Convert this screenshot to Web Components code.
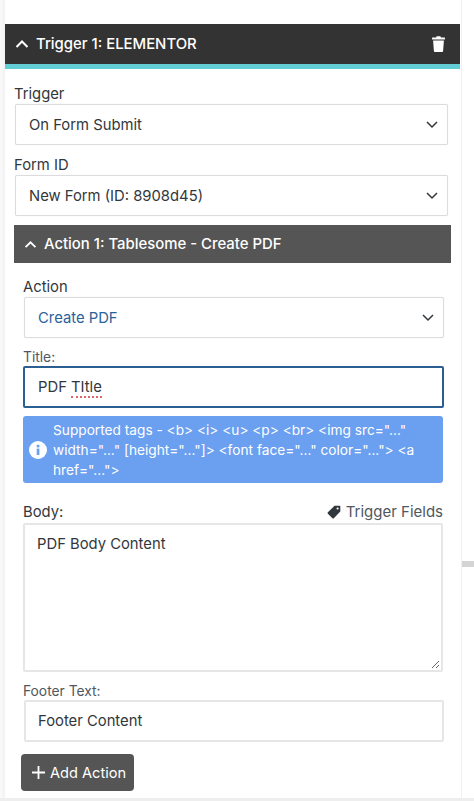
<!DOCTYPE html>
<html>
<head>
<meta charset="utf-8">
<style>
  html, body { margin: 0; height: 100%; background: #fff; overflow: hidden; }
  body { font-family: "Inter", sans-serif; color: #2c3338; }
</style>
</head>
<body>
<trigger-panel>
  <form-select label="Trigger" value="On Form Submit" narrow></form-select>
  <form-select label="Form ID" value="New Form (ID: 8908d45)" narrow></form-select>
  <action-panel title="Action 1: Tablesome - Create PDF">
    <form-select label="Action" value="Create PDF" accent></form-select>
    <text-field label="Title:" value="PDF TItle" focused></text-field>
    <info-note>Supported tags - &lt;b&gt; &lt;i&gt; &lt;u&gt; &lt;p&gt; &lt;br&gt; &lt;img src="..." width="..." [height="..."]&gt; &lt;font face="..." color="..."&gt; &lt;a href="..."&gt;</info-note>
    <body-field label="Body:" value="PDF Body Content"></body-field>
    <text-field label="Footer Text:" value="Footer Content"></text-field>
  </action-panel>
  <add-button>Add Action</add-button>
</trigger-panel>

<script>
class TriggerPanel extends HTMLElement {
  constructor() {
    super();
    this.attachShadow({ mode: "open" }).innerHTML = `
      <style>
        :host { display: flex; width: 474px; height: 801px; box-sizing: border-box; border-bottom: 3px solid #eeeeef; }
        .rail { width: 5px; background: linear-gradient(90deg, #fafafa, #f1f2f3); flex: none; }
        .main { width: 455px; flex: none; padding-top: 24px; box-sizing: border-box; }
        .side { flex: 1; padding-top: 561px; margin-left: 1px; border-left: 1px solid #f1f1f2; }
        .thumb { height: 6px; margin-left: 0; background: #d4d4d4; }
        .head { height: 40px; background: #333; border-bottom: 5px solid #62cdd5; display: flex; align-items: center; padding: 0 15px 0 10px; color: #fff; font-size: 14.9px; font-weight: 500; }
        .head svg.chev { margin-right: 7px; }
        .head span { flex: 1; }
        .body { padding: 5px 9px 0 9px; }
      </style>
      <div class="rail"></div>
      <div class="main">
        <div class="head">
          <svg class="chev" width="14" height="10" viewBox="0 0 14 10"><path d="M1.5 8 7 2.5 12.5 8" fill="none" stroke="#fff" stroke-width="2"/></svg>
          <span>Trigger 1: ELEMENTOR</span>
          <svg width="13" height="16" viewBox="0 0 13 16"><path fill="#fff" d="M4.6.3h3.8l.5 1.3h4v2H.1v-2h4zM1.1 4.6h10.8L11.1 15a1 1 0 0 1-1 1H2.9a1 1 0 0 1-1-1z"/></svg>
        </div>
        <div class="body"><slot></slot></div>
      </div>
      <div class="side"><div class="thumb"></div></div>`;
  }
}

class FormSelect extends HTMLElement {
  constructor() {
    super();
    const accent = this.hasAttribute("accent");
    const narrow = this.hasAttribute("narrow");
    this.attachShadow({ mode: "open" }).innerHTML = `
      <style>
        :host { display: block; }
        label { display: block; font-size: 14.8px; line-height: 20px; color: #32373c; margin-top: ${narrow ? 10 : 9}px; }
        .box { margin: 0 ${narrow ? 3 : 0}px 0 1px; height: 41px; box-sizing: border-box; border: 1px solid #dcdcde; border-radius: 2px; background: #fff; display: flex; align-items: center; justify-content: space-between; padding: 0 8px 0 13px; font-size: 14.8px; color: ${accent ? "#2b6299" : "#32373c"}; box-shadow: 0 0 1px #ddd; }
      </style>
      <label>${this.getAttribute("label")}</label>
      <div class="box"><span>${this.getAttribute("value")}</span>
        <svg width="14" height="9" viewBox="0 0 14 9"><path d="M2 2l5 5 5-5" fill="none" stroke="#32373c" stroke-width="1.5"/></svg>
      </div>`;
  }
}

class ActionPanel extends HTMLElement {
  constructor() {
    super();
    this.attachShadow({ mode: "open" }).innerHTML = `
      <style>
        :host { display: block; margin-top: 9px; }
        .head { height: 38px; background: #555; display: flex; align-items: center; gap: 7px; padding-left: 10px; color: #fff; font-size: 14.9px; font-weight: 500; }
        .body { padding: 5px 7px 0 9px; }
      </style>
      <div class="head">
        <svg width="13" height="9" viewBox="0 0 14 10"><path d="M1.5 8 7 2.5 12.5 8" fill="none" stroke="#fff" stroke-width="2"/></svg>
        <span>${this.getAttribute("title")}</span>
      </div>
      <div class="body"><slot></slot></div>`;
  }
}

class TextField extends HTMLElement {
  constructor() {
    super();
    const focused = this.hasAttribute("focused");
    this.attachShadow({ mode: "open" }).innerHTML = `
      <style>
        :host { display: block; margin-top: 11px; }
        label { display: block; font-size: 13.8px; line-height: 16px; color: #50575e; }
        .box { margin-top: 1px; height: 42px; box-sizing: border-box; margin-left: ${focused ? 0 : 1}px; border: ${focused ? "2px solid #2b5f91" : "2px solid #e6e6e8"}; border-radius: 2px; background: #fff; display: flex; align-items: center; padding-left: ${focused ? 13 : 12}px; font-size: 14.8px; color: #32373c; }
        u { text-decoration: none; border-bottom: 2px dotted #e0656a; }
      </style>
      <label>${this.getAttribute("label")}</label>
      <div class="box"><span>${focused ? "PDF <u>TItle</u>" : this.getAttribute("value")}</span></div>`;
  }
}

class InfoNote extends HTMLElement {
  constructor() {
    super();
    this.attachShadow({ mode: "open" }).innerHTML = `
      <style>
        :host { display: flex; align-items: center; margin-top: 8px; width: 420px; height: 67px; box-sizing: border-box; padding: 0 10px 0 6px; background: #6b9ff0; border-radius: 3px; color: #fff; font-size: 13.7px; line-height: 20px; }
        svg { flex: none; margin-right: 6px; }
      </style>
      <svg width="18" height="18" viewBox="0 0 18 18"><circle cx="9" cy="9" r="9" fill="#fff"/><rect x="7.7" y="7.6" width="2.7" height="6.4" fill="#6b9ff0"/><rect x="7.7" y="3.8" width="2.7" height="2.6" fill="#6b9ff0"/></svg>
      <div><slot></slot></div>`;
  }
}

class BodyField extends HTMLElement {
  constructor() {
    super();
    this.attachShadow({ mode: "open" }).innerHTML = `
      <style>
        :host { display: block; margin-top: 19px; width: 420px; }
        .top { display: flex; justify-content: space-between; align-items: center; font-size: 14.8px; line-height: 20px; color: #32373c; }
        .tag { display: flex; align-items: center; gap: 5px; color: #50575e; font-size: 15px; }
        .box { position: relative; margin-top: 1px; height: 149px; box-sizing: border-box; border: 2px solid #e6e6e8; border-radius: 2px; background: #fff; padding: 10px 12px; font-size: 14.8px; color: #32373c; }
        .grip { position: absolute; right: 1px; bottom: 1px; }
      </style>
      <div class="top"><span>${this.getAttribute("label")}</span>
        <span class="tag"><svg width="14" height="14" viewBox="0 0 14 14"><path fill="#32373c" d="M7.5.8h5a.8.8 0 0 1 .8.8v5L6.8 13.2a1 1 0 0 1-1.4 0L.9 8.7a1 1 0 0 1 0-1.4z"/><circle cx="10.6" cy="3.5" r="1.1" fill="#fff"/></svg>Trigger Fields</span></div>
      <div class="box">${this.getAttribute("value")}
        <svg class="grip" width="9" height="9" viewBox="0 0 9 9"><path d="M1 8 8 1M5 8l3-3" stroke="#666" stroke-width="1" fill="none"/></svg>
      </div>`;
  }
}

class AddButton extends HTMLElement {
  constructor() {
    super();
    this.attachShadow({ mode: "open" }).innerHTML = `
      <style>
        :host { display: inline-flex; align-items: center; gap: 4px; margin: 12px 0 0 7px; height: 37px; width: 113px; box-sizing: border-box; padding-left: 10px; background: #555; border-radius: 4px; color: #fff; font-size: 14.6px; }
      </style>
      <svg width="15" height="15" viewBox="0 0 15 15"><path d="M7.5 1v13M1 7.5h13" stroke="#fff" stroke-width="1.8"/></svg>
      <span><slot></slot></span>`;
  }
}

customElements.define("trigger-panel", TriggerPanel);
customElements.define("form-select", FormSelect);
customElements.define("action-panel", ActionPanel);
customElements.define("text-field", TextField);
customElements.define("info-note", InfoNote);
customElements.define("body-field", BodyField);
customElements.define("add-button", AddButton);
</script>
</body>
</html>
